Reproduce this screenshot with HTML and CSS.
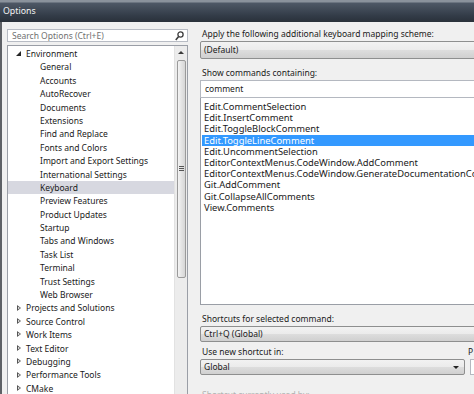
FILE: index.html
```html
<html lang="en">

<head>
    <meta charset="UTF-8">
    <title>Options</title>
    <link rel="stylesheet" href="styles.css">
</head>

<body>
    <div class="titlebar">Options</div>
    <div class="window">
        <div class="left">
            <div class="search">
                <span class="placeholder">Search Options (Ctrl+E)</span>
                <svg class="magnifier" width="9" height="10" viewBox="0 0 9 10">
                    <circle cx="5.5" cy="3.5" r="2.6" fill="none" stroke="#3c3c3c" stroke-width="1.3"/>
                    <path d="M3.6 5.6 L0.8 9" stroke="#3c3c3c" stroke-width="1.6"/>
                </svg>
            </div>
            <div class="tree">
                <div class="tree-items" id="tree-items"></div>
                <div class="scrollbar">
                    <div class="arrow-up"></div>
                    <div class="thumb"><div class="grip"></div></div>
                </div>
            </div>
        </div>
        <div class="right">
            <div class="label">Apply the following additional keyboard mapping scheme:</div>
            <div class="combo wide">(Default)</div>
            <div class="label gap">Show commands containing:</div>
            <div class="textbox">comment</div>
            <div class="listbox" id="listbox"></div>
            <div class="label gap">Shortcuts for selected command:</div>
            <div class="combo wide short">Ctrl+Q (Global)</div>
            <div class="label-row">
                <div class="label">Use new shortcut in:</div>
                <div class="label side">P</div>
            </div>
            <div class="combo-row">
                <div class="combo short dropdown">Global<span class="drop-arrow"></span></div>
                <div class="textbox short side-box"></div>
            </div>
            <div class="label faded">Shortcut currently used by:</div>
        </div>
    </div>
    <script>
        const tree_data=[
            ["open","Environment"],
            ["child","General"],["child","Accounts"],["child","AutoRecover"],["child","Documents"],
            ["child","Extensions"],["child","Find and Replace"],["child","Fonts and Colors"],
            ["child","Import and Export Settings"],["child","International Settings"],
            ["selected","Keyboard"],["child","Preview Features"],["child","Product Updates"],
            ["child","Startup"],["child","Tabs and Windows"],["child","Task List"],["child","Terminal"],
            ["child","Trust Settings"],["child","Web Browser"],
            ["closed","Projects and Solutions"],["closed","Source Control"],["closed","Work Items"],
            ["closed","Text Editor"],["closed","Debugging"],["closed","Performance Tools"],["closed","CMake"]
        ];
        const tree_items=document.getElementById("tree-items");
        for (const [kind,text] of tree_data) {
            const row=document.createElement("div");
            row.classList.add("tree-row",kind);
            if (kind==="open"||kind==="closed") {
                const tri=document.createElement("span");
                tri.classList.add("tri");
                row.appendChild(tri);
            }
            const label=document.createElement("span");
            label.textContent=text;
            row.appendChild(label);
            tree_items.appendChild(row);
        }
        const commands=["Edit.CommentSelection","Edit.InsertComment","Edit.ToggleBlockComment",
            "Edit.ToggleLineComment","Edit.UncommentSelection","EditorContextMenus.CodeWindow.AddComment",
            "EditorContextMenus.CodeWindow.GenerateDocumentationComment","Git.AddComment",
            "Git.CollapseAllComments","View.Comments"];
        const listbox=document.getElementById("listbox");
        for (const c of commands) {
            const item=document.createElement("div");
            item.classList.add("list-item");
            if (c==="Edit.ToggleLineComment") item.classList.add("selected");
            item.textContent=c;
            listbox.appendChild(item);
        }
    </script>
</body>

</html>
```

FILE: styles.css
```css
html,
body {
    width: 474px;
    height: 394px;
    margin: 0;
    padding: 0;
    overflow: hidden;
    background-color: #f0f0f0;
    font-family: "Noto Sans", sans-serif;
    font-size: 8.5px;
    color: #1a1a1a;
}

.titlebar {
    height: 22px;
    box-sizing: border-box;
    padding: 2px 0 0 3px;
    line-height: 18px;
    color: #f4f4f4;
    font-size: 8.8px;
    background: linear-gradient(#8a929c 0, #8a929c 2px, #4e5866 3px, #323b47 16px, #2a313a 22px);
}

.window {
    display: flex;
    height: 372px;
    border-left: 2px solid #5e6166;
    box-sizing: border-box;
    padding: 6px 0 0 5px;
}

.left {
    width: 181px;
    flex-shrink: 0;
    display: flex;
    flex-direction: column;
    gap: 3px;
    margin-top: 1px;
}

.search {
    height: 17px;
    border: 1px solid #b8bcc4;
    background-color: white;
    display: flex;
    align-items: center;
    padding: 0 3px 0 4px;
    justify-content: space-between;
}

.placeholder {
    color: #707070;
}

.tree {
    flex: 1;
    border: 1px solid #9a9ea6;
    border-bottom: none;
    background-color: white;
    display: flex;
}

.tree-items {
    flex: 1;
    padding-top: 1px;
}

.tree-row {
    height: 13.4px;
    line-height: 13.4px;
    padding-left: 32px;
    white-space: nowrap;
}

.tree-row.open,
.tree-row.closed {
    padding-left: 7px;
    display: flex;
    align-items: center;
}

.tree-row.selected {
    background-color: #d7d8e0;
}

.tri {
    width: 11px;
    height: 13px;
    position: relative;
}

.open .tri::before {
    content: "";
    position: absolute;
    left: 1px;
    top: 4px;
    border-left: 5px solid transparent;
    border-bottom: 5px solid #262626;
}

.closed .tri::before {
    content: "";
    position: absolute;
    left: 2px;
    top: 3px;
    border-top: 3.5px solid transparent;
    border-bottom: 3.5px solid transparent;
    border-left: 4px solid #555;
}

.closed .tri::after {
    content: "";
    position: absolute;
    left: 3px;
    top: 5px;
    border-top: 1.5px solid transparent;
    border-bottom: 1.5px solid transparent;
    border-left: 2px solid white;
}

.scrollbar {
    width: 12px;
    background-color: #ececec;
    border-left: 1px solid #e2e2e2;
    display: flex;
    flex-direction: column;
    align-items: center;
}

.arrow-up {
    margin-top: 5px;
    border-left: 3px solid transparent;
    border-right: 3px solid transparent;
    border-bottom: 3px solid #3a3a3a;
}

.thumb {
    margin-top: 6px;
    width: 9px;
    height: 218px;
    border: 1px solid #9a9a9a;
    border-radius: 2px;
    background: linear-gradient(to right, #f4f4f4, #e4e4e4 50%, #d6d6d6);
    display: flex;
    justify-content: center;
    padding-top: 105px;
    box-sizing: border-box;
}

.grip {
    width: 5px;
    height: 5px;
    background: repeating-linear-gradient(#555 0 1px, transparent 1px 2px);
}

.right {
    margin-left: 12px;
    flex: 1;
    display: flex;
    flex-direction: column;
    min-width: 0;
}

.right > * {
    flex-shrink: 0;
}

.label {
    height: 12px;
    line-height: 12px;
    padding-left: 2px;
    margin-bottom: 1px;
    white-space: nowrap;
}

.label.gap {
    margin-top: 8px;
}

.combo {
    height: 16px;
    line-height: 16px;
    border: 1px solid #8e8f8f;
    border-radius: 2px;
    padding-left: 3px;
    background: linear-gradient(#f2f2f2, #ebebeb 50%, #dddddd 51%, #d0d0d0);
    white-space: nowrap;
}

.combo.short,
.textbox.short {
    height: 14px;
    line-height: 14px;
}

.wide {
    margin-right: -10px;
}

.textbox {
    height: 16px;
    line-height: 16px;
    border: 1px solid #b4b8c0;
    background-color: white;
    padding-left: 4px;
    margin-right: -10px;
}

.listbox {
    height: 203px;
    border: 1px solid #9a9ea6;
    border-top: none;
    background-color: white;
    margin-right: -10px;
    padding-top: 3px;
    overflow: hidden;
}

.list-item {
    height: 11.2px;
    line-height: 11.2px;
    font-size: 9.4px;
    padding-left: 2px;
    margin-left: 1px;
    white-space: nowrap;
}

.list-item.selected {
    background-color: #3399ff;
    color: white;
}

.label-row {
    display: flex;
    justify-content: space-between;
    margin-top: 4px;
}

.label.side {
    width: 6px;
    overflow: hidden;
}

.combo-row {
    display: flex;
    gap: 5px;
}

.dropdown {
    flex: 1;
    display: flex;
    justify-content: space-between;
    align-items: center;
    padding-right: 5px;
}

.drop-arrow {
    border-left: 3px solid transparent;
    border-right: 3px solid transparent;
    border-top: 3px solid #222;
}

.side-box {
    width: 10px;
    margin-right: -12px;
}

.faded {
    color: #b0b0b0;
    margin-top: 14px;
}
```
